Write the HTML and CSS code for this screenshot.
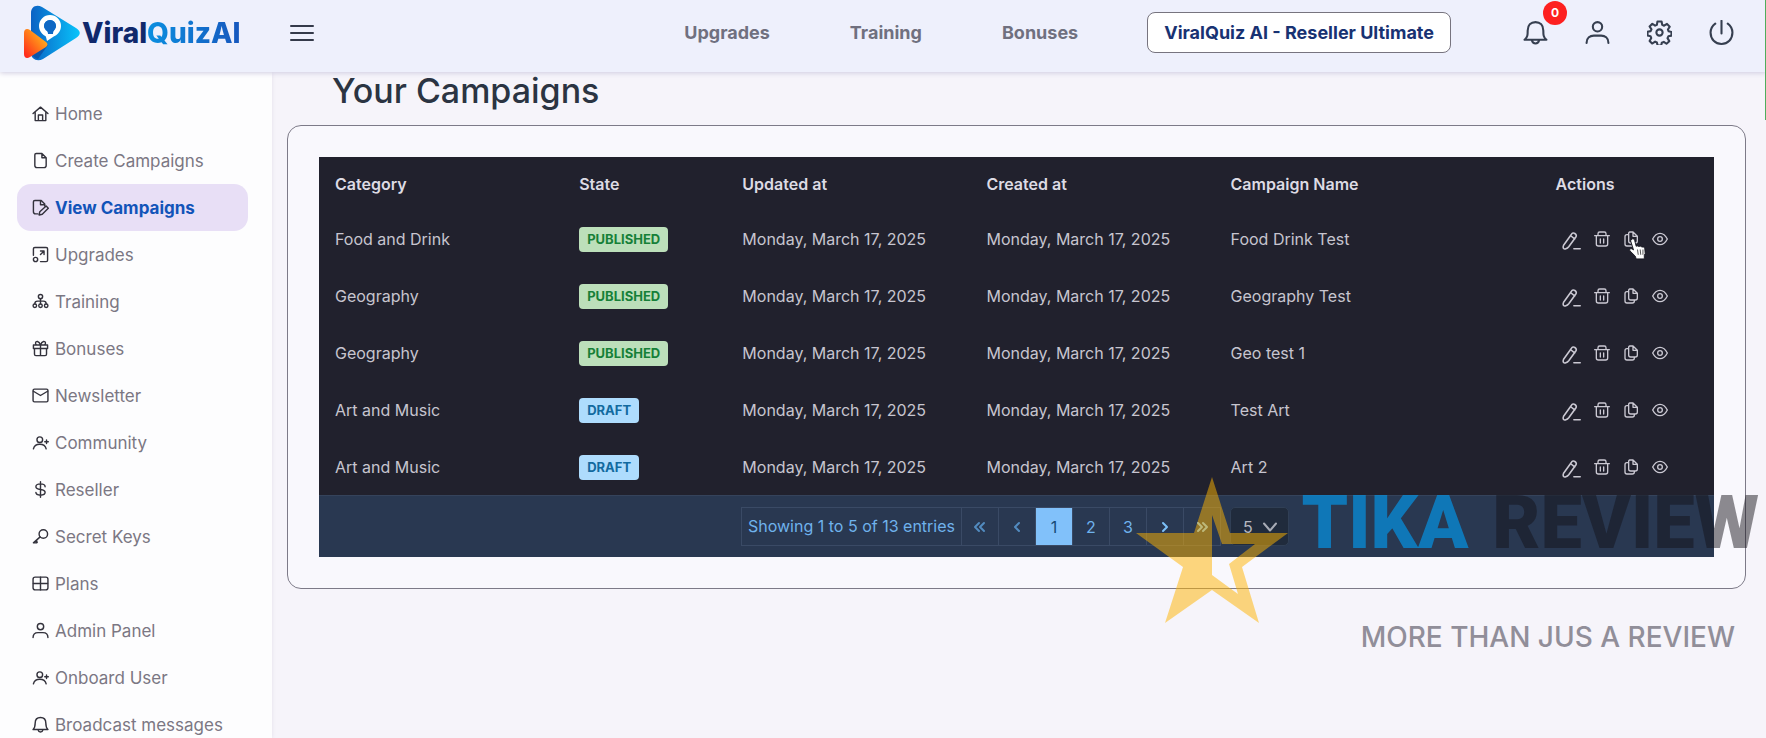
FILE: index.html
```html
<!DOCTYPE html>
<html lang="en">
<head>
<meta charset="utf-8">
<title>ViralQuizAI - Your Campaigns</title>
<link rel="stylesheet" href="styles.css">
</head>
<body>
<svg class="sprite" aria-hidden="true">
  <defs>
    <symbol id="i-home" viewBox="0 0 24 24"><path d="M1.500 12 12 3l10.500 9M4.500 10v12h15V10M9 21v-7h6v7"/></symbol>
    <symbol id="i-file" viewBox="0 0 24 24"><path d="M6 2h8l6 6v11a3 3 0 0 1-3 3H7a3 3 0 0 1-3-3V4a2 2 0 0 1 2-2zM14 2v6h6"/></symbol>
    <symbol id="i-edit" viewBox="0 0 24 24"><path d="M8 21H5a3 3 0 0 1-3-3V4a2 2 0 0 1 2-2h9l5 5v3M12 2v6h6M20 10l3 3-8.500 8.500L10 22.500l1-4.500z"/></symbol>
    <symbol id="i-upgrade" viewBox="0 0 24 24"><path d="M2 13V4a2 2 0 0 1 2-2h16a2 2 0 0 1 2 2v16a2 2 0 0 1-2 2h-8M12 12l5-5M12 7h5v5"/><circle cx="5" cy="19" r="3"/></symbol>
    <symbol id="i-tree" viewBox="0 0 24 24"><circle cx="12" cy="5" r="3"/><circle cx="4" cy="18" r="2.500"/><circle cx="12" cy="18" r="2.500"/><circle cx="20" cy="18" r="2.500"/><path d="M12 8v7M4 15c0-3 2-3.500 4-3.500h8c2 0 4 .5 4 3.500"/></symbol>
    <symbol id="i-gift" viewBox="0 0 24 24"><path d="M2 7h20v5H2zM3.500 12v8a2 2 0 0 0 2 2h13a2 2 0 0 0 2-2v-8M12 7v15M12 7C10 1 5 1 5 4.500 5 6 6 7 7 7M12 7c2-6 7-6 7-2.500C19 6 18 7 17 7"/></symbol>
    <symbol id="i-mail" viewBox="0 0 24 24"><rect x="1.500" y="3" width="21" height="18" rx="2"/><path d="m2 6 10 6 10-6"/></symbol>
    <symbol id="i-useradd" viewBox="0 0 24 24"><circle cx="11" cy="8" r="4"/><path d="M2 21c1-4.500 4-6.500 9-6.500s8 2 9 6.500M18 11h5M20.500 8.500v5"/></symbol>
    <symbol id="i-dollar" viewBox="0 0 24 24"><path d="M12 1v22M18.500 8c0-3-2-4-6.500-4s-6.500 1-6.500 4c0 6 13 2 13 8 0 3-2 4-6.500 4s-6.500-1-6.500-4"/></symbol>
    <symbol id="i-key" viewBox="0 0 24 24"><circle cx="16" cy="8.500" r="6"/><path d="M11.500 12.500 2 21h4.500v-3.500M5 18.500 7.500 20"/></symbol>
    <symbol id="i-grid" viewBox="0 0 24 24"><rect x="1.500" y="3" width="21" height="18" rx="3"/><path d="M12 3v18M2 12h20"/></symbol>
    <symbol id="i-user" viewBox="0 0 24 24"><circle cx="12" cy="6.500" r="4.500"/><path d="M1.500 22c0-5 3.500-7 7-7h7c3.500 0 7 2 7 7"/></symbol>
    <symbol id="i-bell" viewBox="0 0 24 24"><path d="M1.500 19h21c-3-2.500-3-5-3-9 0-5-3-8-7.500-8s-7.500 3-7.500 8c0 4 0 6.500-3 9zM8.500 19.500c.5 2 1.500 3 3.500 3s3-1 3.500-3"/></symbol>
    <symbol id="i-gear" viewBox="0 0 24 24"><path d="M10 1.500h4l.6 3.200 1.800.8 2.800-1.800 2.600 2.700-1.700 2.800.7 1.700 2.700.6v3.500l-3 .7-.8 1.700 1.700 2.900-2.700 2.500-2.600-1.800-1.900.8-.6 2.700h-3.400l-.7-2.900-1.700-.8-2.900 1.800-2.400-2.500 1.600-2.800-.7-1.800-2.900-.6v-3.600l3-.6.8-1.700-1.800-2.800 2.600-2.600 2.700 1.800 1.700-.8z"/><circle cx="12" cy="12" r="3"/></symbol>
    <symbol id="i-power" viewBox="0 0 24 24"><path d="M12 .8V13M6 3.500A11 11 0 0 0 1.500 12C1.500 18.500 6 23 12 23s10.500-4.500 10.500-11A11 11 0 0 0 18 3.500"/></symbol>
    <symbol id="i-pencil" viewBox="0 0 24 24"><path d="M2 18 12 4c2-3.500 7.500 0 5.500 3.500L8.500 20c-2 2.500-5.500 3.500-6.500 2-.8-1-.6-2.600 0-4zM11 6l5 4M15 22.500h8"/></symbol>
    <symbol id="i-trash" viewBox="0 0 24 24"><path d="M1 7h22M3.500 7v12.500a3 3 0 0 0 3 3h11a3 3 0 0 0 3-3V7M6 7V4a2.500 2.500 0 0 1 2.500-2.500h7A2.500 2.500 0 0 1 18 4v3M9.500 12v6M14.500 12v6"/></symbol>
    <symbol id="i-copy" viewBox="0 0 24 24"><path d="M10 1.500h5l6.500 6.500v7a3 3 0 0 1-3 3h-7a3 3 0 0 1-3-3V3.500a2 2 0 0 1 1.500-2zM15 2v6h6M8 5.500H6a3 3 0 0 0-3 3v11a3 3 0 0 0 3 3h8a3 3 0 0 0 3-3V18"/></symbol>
    <symbol id="i-eye" viewBox="0 0 24 24"><path d="M1 12c3-6 7-8.500 11-8.500S20 6 23 12c-3 6-7 8.500-11 8.500S4 18 1 12z"/><circle cx="12" cy="12" r="3.500"/></symbol>
  </defs>
</svg>

<header class="topbar">
  <a class="brand" href="#">
    <svg class="brand-mark" viewBox="0 0 56 56" aria-hidden="true">
      <defs>
        <linearGradient id="g-blue" x1="0" x2="1"><stop offset="0" stop-color="#0b62c4"/><stop offset="1" stop-color="#08c4fb"/></linearGradient>
        <linearGradient id="g-fire" x1="0" y1="1" x2="1" y2="0"><stop offset="0" stop-color="#ff1d1d"/><stop offset=".5" stop-color="#ff7a1a"/><stop offset="1" stop-color="#ffd21f"/></linearGradient>
      </defs>
      <path fill="url(#g-blue)" d="M7 8C7 2 12-1 18 2l34 21c5 3 5 7 0 10L19 54c-6 3-12 0-12-6z"/>
      <path fill="#0a4a9c" opacity=".7" d="M8 28l16 12-10 14c-4-1-6-4-6-8z"/>
      <circle cx="26" cy="21" r="8.500" fill="#1277d4" stroke="#fff" stroke-width="5"/>
      <path d="M19 28c3 2 3 4 4 8l6-4 3-4z" fill="#fff"/>
      <path d="M20 21a6 6 0 0 1 12 0c0 3-3 4-3 8h-5c0-4-4-5-4-8z" fill="#0f68c4"/>
      <path fill="url(#g-fire)" d="M0 28c0-4 3-5 6-3l16 12c2 2 2 3 0 5L6 52c-3 2-6 1-6-3z"/>
    </svg>
    <span class="brand-name">Viral<span class="brand-accent">QuizAI</span></span>
  </a>
  <button class="burger" type="button" aria-label="Toggle menu"><span></span><span></span><span></span></button>
  <nav class="topnav">
    <a href="#">Upgrades</a>
    <a href="#">Training</a>
    <a href="#">Bonuses</a>
  </nav>
  <button class="plan" type="button">ViralQuiz AI - Reseller Ultimate</button>
  <div class="tools">
    <button type="button" aria-label="Notifications"><svg><use href="#i-bell"/></svg><span class="count">0</span></button>
    <button type="button" aria-label="Profile"><svg><use href="#i-user"/></svg></button>
    <button type="button" aria-label="Settings"><svg><use href="#i-gear"/></svg></button>
    <button type="button" aria-label="Log out"><svg><use href="#i-power"/></svg></button>
  </div>
</header>

<div class="shell">
  <nav class="sidebar">
    <a href="#"><svg><use href="#i-home"/></svg>Home</a>
    <a href="#"><svg><use href="#i-file"/></svg>Create Campaigns</a>
    <a href="#" class="active"><svg><use href="#i-edit"/></svg>View Campaigns</a>
    <a href="#"><svg><use href="#i-upgrade"/></svg>Upgrades</a>
    <a href="#"><svg><use href="#i-tree"/></svg>Training</a>
    <a href="#"><svg><use href="#i-gift"/></svg>Bonuses</a>
    <a href="#"><svg><use href="#i-mail"/></svg>Newsletter</a>
    <a href="#"><svg><use href="#i-useradd"/></svg>Community</a>
    <a href="#"><svg><use href="#i-dollar"/></svg>Reseller</a>
    <a href="#"><svg><use href="#i-key"/></svg>Secret Keys</a>
    <a href="#"><svg><use href="#i-grid"/></svg>Plans</a>
    <a href="#"><svg><use href="#i-user"/></svg>Admin Panel</a>
    <a href="#"><svg><use href="#i-useradd"/></svg>Onboard User</a>
    <a href="#"><svg><use href="#i-bell"/></svg>Broadcast messages</a>
  </nav>

  <main class="content">
    <h1>Your Campaigns</h1>
    <section class="card">
      <table class="campaigns">
        <colgroup><col class="c-cat"><col class="c-state"><col class="c-date"><col class="c-date"><col class="c-name"><col class="c-act"></colgroup>
        <thead>
          <tr><th>Category</th><th>State</th><th>Updated at</th><th>Created at</th><th>Campaign Name</th><th>Actions</th></tr>
        </thead>
        <tbody>
          <tr><td>Food and Drink</td><td><span class="tag published">PUBLISHED</span></td><td>Monday, March 17, 2025</td><td>Monday, March 17, 2025</td><td>Food Drink Test</td>
            <td><div class="actions"><button type="button" class="pen" aria-label="Edit"><svg><use href="#i-pencil"/></svg></button><button type="button" aria-label="Delete"><svg><use href="#i-trash"/></svg></button><button type="button" aria-label="Copy"><svg><use href="#i-copy"/></svg><svg class="pointer" viewBox="0 0 20 24"><path d="M3 1c1.500-1 3 0 3.300 1.500L8 9l1-.6 2 .8 1.500-.4 2 1 1.500 0 1.500 1.500L18 17l-1 2v4H8l-1-3-6-6c-1-2 1-3 2.500-2L5 13 2 3.500C1.800 2.500 2 1.500 3 1z"/><path class="lines" d="M9.500 13l.7 5M12.500 13l.5 5M15.500 13v5"/></svg></button><button type="button" aria-label="View"><svg><use href="#i-eye"/></svg></button></div></td></tr>
          <tr><td>Geography</td><td><span class="tag published">PUBLISHED</span></td><td>Monday, March 17, 2025</td><td>Monday, March 17, 2025</td><td>Geography Test</td>
            <td><div class="actions"><button type="button" class="pen" aria-label="Edit"><svg><use href="#i-pencil"/></svg></button><button type="button" aria-label="Delete"><svg><use href="#i-trash"/></svg></button><button type="button" aria-label="Copy"><svg><use href="#i-copy"/></svg></button><button type="button" aria-label="View"><svg><use href="#i-eye"/></svg></button></div></td></tr>
          <tr><td>Geography</td><td><span class="tag published">PUBLISHED</span></td><td>Monday, March 17, 2025</td><td>Monday, March 17, 2025</td><td>Geo test 1</td>
            <td><div class="actions"><button type="button" class="pen" aria-label="Edit"><svg><use href="#i-pencil"/></svg></button><button type="button" aria-label="Delete"><svg><use href="#i-trash"/></svg></button><button type="button" aria-label="Copy"><svg><use href="#i-copy"/></svg></button><button type="button" aria-label="View"><svg><use href="#i-eye"/></svg></button></div></td></tr>
          <tr><td>Art and Music</td><td><span class="tag draft">DRAFT</span></td><td>Monday, March 17, 2025</td><td>Monday, March 17, 2025</td><td>Test Art</td>
            <td><div class="actions"><button type="button" class="pen" aria-label="Edit"><svg><use href="#i-pencil"/></svg></button><button type="button" aria-label="Delete"><svg><use href="#i-trash"/></svg></button><button type="button" aria-label="Copy"><svg><use href="#i-copy"/></svg></button><button type="button" aria-label="View"><svg><use href="#i-eye"/></svg></button></div></td></tr>
          <tr><td>Art and Music</td><td><span class="tag draft">DRAFT</span></td><td>Monday, March 17, 2025</td><td>Monday, March 17, 2025</td><td>Art 2</td>
            <td><div class="actions"><button type="button" class="pen" aria-label="Edit"><svg><use href="#i-pencil"/></svg></button><button type="button" aria-label="Delete"><svg><use href="#i-trash"/></svg></button><button type="button" aria-label="Copy"><svg><use href="#i-copy"/></svg></button><button type="button" aria-label="View"><svg><use href="#i-eye"/></svg></button></div></td></tr>
        </tbody>
      </table>
      <div class="pager">
        <div class="pages">
          <span class="summary">Showing 1 to 5 of 13 entries</span>
          <button type="button" class="dim" aria-label="First page"><svg viewBox="0 0 16 16"><path d="M7 4 3 8l4 4M12 4 8 8l4 4"/></svg></button>
          <button type="button" class="dim" aria-label="Previous page"><svg viewBox="0 0 16 16"><path d="M10 4 6 8l4 4"/></svg></button>
          <button type="button" class="current">1</button>
          <button type="button">2</button>
          <button type="button">3</button>
          <button type="button" class="lit" aria-label="Next page"><svg viewBox="0 0 16 16"><path d="m6 4 4 4-4 4"/></svg></button>
          <button type="button" class="lit" aria-label="Last page"><svg viewBox="0 0 16 16"><path d="m4 4 4 4-4 4M9 4l4 4-4 4"/></svg></button>
        </div>
        <div class="rows">
          <select aria-label="Rows per page"><option>5</option><option>10</option></select>
          <svg viewBox="0 0 16 16" aria-hidden="true"><path d="m2 4.500 6 7 6-7"/></svg>
        </div>
      </div>
    </section>
  </main>
</div>

<div class="watermark">
  <svg class="wm-star" viewBox="0 0 152 146" aria-hidden="true"><path fill-rule="evenodd" d="M76 0 94 56h58l-46 34 17 56-47-33-47 33 18-56L0 56h58zM76 38v60l26 19-9-30 26-20H86z"/></svg>
  <div class="wm-text">
    <div class="wm-name"><span class="wm-blue">TIKA</span><span class="wm-black">REVIEW</span></div>
    <div class="wm-line">MORE THAN JUS A REVIEW</div>
  </div>
</div>
<div class="edge"></div>
</body>
</html>
```

FILE: styles.css
```css
* { box-sizing: border-box; }

body {
  margin: 0;
  min-height: 100vh;
  display: flex;
  flex-direction: column;
  overflow: hidden;
  position: relative;
  background: #f6f4fa;
  color: #2b3442;
  font: 16px/24px Inter, "Open Sans", sans-serif;
}

a { color: inherit; text-decoration: none; }
button { font: inherit; color: inherit; background: none; border: 0; padding: 0; cursor: pointer; }
svg { fill: none; stroke: currentColor; stroke-width: 2; stroke-linecap: round; stroke-linejoin: round; display: block; }
.sprite { position: absolute; width: 0; height: 0; }

.topbar {
  height: 72px;
  flex: none;
  display: flex;
  align-items: center;
  padding: 0 32px 7px 24px;
  background: #eef0fc;
  box-shadow: 0 1px 5px #cfcbe0;
  z-index: 1;
}
.brand { display: flex; align-items: center; gap: 2px; width: 266px; }
.brand-mark { width: 56px; height: 56px; stroke: none; overflow: visible; }
.brand-name { font-size: 28px; font-weight: 800; color: #10296c; }
.brand-accent { background: linear-gradient(90deg, #0a8fe0, #1757bd); -webkit-background-clip: text; background-clip: text; color: transparent; }
.burger { display: flex; flex-direction: column; gap: 5px; width: 24px; }
.burger span { height: 2px; border-radius: 1px; background: #343a4a; }
.topnav { display: flex; gap: 80px; margin: 0 69px 0 auto; font-size: 18px; font-weight: 700; color: #70707f; }
.plan {
  height: 41px;
  padding: 0 16px;
  border: 1px solid #77747f;
  border-radius: 8px;
  background: #fff;
  color: #183272;
  font-size: 18px;
  font-weight: 700;
  white-space: nowrap;
}
.tools { display: flex; gap: 37px; margin-left: 72px; color: #363f50; }
.tools button { position: relative; }
.tools svg { width: 25px; height: 25px; }
.count {
  position: absolute;
  left: 20px;
  top: -19px;
  width: 24px;
  height: 24px;
  border-radius: 50%;
  background: #fd2020;
  color: #fff;
  font-size: 12px;
  font-weight: 700;
}

.shell { flex: 1; display: flex; }
.sidebar {
  flex: none;
  width: 272px;
  height: calc(100vh - 72px);
  overflow: hidden;
  padding: 18px 24px 0 17px;
  background: #fdfdfe;
  box-shadow: 0 0 4px #e2dfea;
}
.sidebar a {
  display: flex;
  align-items: center;
  gap: 6px;
  height: 47px;
  padding-left: 15px;
  border-radius: 14px;
  font-size: 17px;
  color: #7b7783;
}
.sidebar svg { width: 17px; height: 17px; stroke-width: 2; color: #33323c; }
.sidebar .active { background: #e8dff6; color: #1254b9; font-weight: 700; }

.content { flex: 1; min-width: 0; padding: 0 20px 0 15px; }
h1 { margin: 0 0 15px 45px; font-size: 34px; line-height: 38px; font-weight: 500; }
.card { border: 1px solid #7d7a88; border-radius: 14px; padding: 31px; background: #f9f8fd; }

.campaigns { width: 100%; table-layout: fixed; border-collapse: collapse; background: #21212d; color: #c7c5cf; }
.c-cat, .c-date { width: 17.5%; }
.c-state { width: 11.7%; }
.c-name { width: 23.3%; }
.c-act { width: 12.5%; }
.campaigns th, .campaigns td { height: 57px; padding: 0 16px; text-align: left; white-space: nowrap; }
.campaigns th { height: 53px; font-weight: 600; color: #dddbe4; }
.tag { display: inline-block; padding: 0 8px; border-radius: 4px; font-size: 13px; line-height: 25px; font-weight: 700; vertical-align: middle; }
.published { background: #bcdfba; color: #168038; }
.draft { background: #aedcfd; color: #126a9f; }
.actions { display: flex; align-items: center; gap: 13px; padding-left: 6px; }
.actions button { position: relative; }
.actions svg { width: 16px; height: 16px; color: #cbc9d3; }
.actions .pen svg { width: 19px; height: 19px; margin-top: 4px; }
.actions .pointer { position: absolute; left: 6px; top: 7px; width: 18px; height: 22px; fill: #fff; stroke: #16161f; stroke-width: 1; }
.pointer .lines { stroke: #444; }

.pager {
  display: flex;
  justify-content: center;
  align-items: center;
  gap: 9px;
  height: 62px;
  padding-right: 3px;
  border-top: 1px solid #35435b;
  background: #293851;
  color: #6fb2ec;
}
.pages { display: flex; height: 39px; border: 1px solid #3a4a65; }
.summary { padding: 6px; white-space: nowrap; }
.pages button { width: 37px; display: flex; align-items: center; justify-content: center; border-left: 1px solid #3a4a65; }
.pages svg { width: 16px; height: 16px; }
.pages .dim { color: #528bbf; }
.pages .lit { color: #7cc0f8; }
.pages .current { background: #81c1fa; color: #174a75; }
.rows { position: relative; }
.rows select { appearance: none; width: 59px; height: 39px; padding-left: 12px; border: 1px solid #303f55; border-radius: 5px; background: #202b3c; color: #b5b7c0; font: inherit; }
.rows svg { position: absolute; right: 11px; top: 12px; width: 16px; height: 16px; color: #a7abb5; }

/* Semi-transparent brand overlay across the lower right corner */
.watermark { position: absolute; right: 7px; top: 474px; display: flex; gap: 14px; pointer-events: none; z-index: 2; }
.wm-star { width: 152px; height: 146px; margin-top: 3px; fill: #ffb400; stroke: none; opacity: 0.5; }
.wm-name { display: flex; justify-content: flex-end; gap: 24px; font: 900 74px/98px Roboto, sans-serif; white-space: nowrap; }
.wm-blue { color: rgba(0, 158, 245, 0.62); }
.wm-black { color: rgba(18, 16, 24, 0.48); }
.wm-line { margin: 50px 24px 0 0; text-align: right; font: 500 28px/30px Inter, sans-serif; color: #918e99; }
.edge { position: absolute; right: 0; top: 0; width: 1px; height: 120px; background: #4fae5c; z-index: 2; }
```
